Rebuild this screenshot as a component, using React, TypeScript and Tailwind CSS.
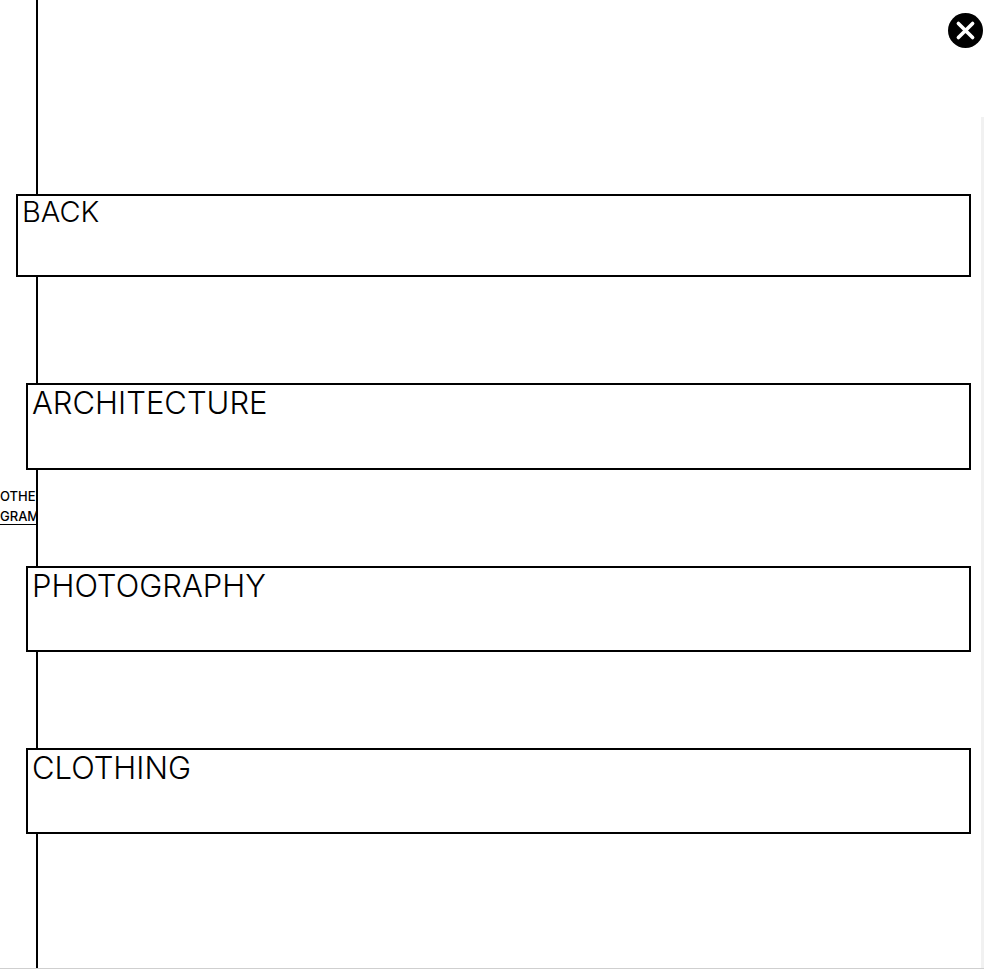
interface MenuItemProps {
  label: string;
  className: string;
}

function MenuItem({ label, className }: MenuItemProps) {
  return (
    <a
      href="#"
      className={`block border-2 border-black bg-white pl-1 text-black no-underline ${className}`}
    >
      {label}
    </a>
  );
}

function CloseButton() {
  return (
    <button type="button" aria-label="Close" className="h-[35px] w-[35px] cursor-pointer">
      <svg viewBox="0 0 35 35" className="block h-full w-full">
        <circle cx="17.5" cy="17.5" r="17.5" fill="#000" />
        <path
          d="M10.4 10.4 L24.6 24.6 M24.6 10.4 L10.4 24.6"
          stroke="#fff"
          strokeWidth="3.6"
          strokeLinecap="round"
        />
      </svg>
    </button>
  );
}

function App() {
  return (
    <div className="flex min-h-screen flex-col border-b border-[#cfcfcf] bg-white font-['Inter',sans-serif] text-black">
      <div className="flex flex-1">
        <aside className="w-9 shrink-0 overflow-hidden pt-[486px]">
          <a href="#" className="block text-[13px] leading-5 font-medium whitespace-nowrap">
            <span className="block">OTHER</span>
            <span className="block h-[19px] border-b border-black">GRAM</span>
          </a>
        </aside>

        <div className="flex min-w-0 flex-1 flex-col border-l-2 border-black">
          <header className="flex h-[117px] shrink-0 justify-end pt-[13px] pr-px">
            <CloseButton />
          </header>

          <div className="flex flex-1">
            <nav className="flex-1 pt-[77px] pr-[10px] pb-8 font-light">
              <MenuItem label="BACK" className="mb-[106px] -ml-[22px] h-[83px] text-[29px] leading-8" />
              <MenuItem label="ARCHITECTURE" className="mb-24 -ml-3 h-[87px] text-[31px] leading-9" />
              <MenuItem label="PHOTOGRAPHY" className="mb-24 -ml-3 h-[86px] text-[31px] leading-9" />
              <MenuItem label="CLOTHING" className="-ml-3 h-[86px] text-[31px] leading-9" />
            </nav>
            <div className="w-[3px] shrink-0 bg-[#f1f1f1]" />
          </div>
        </div>
      </div>
    </div>
  );
}

export default App;
